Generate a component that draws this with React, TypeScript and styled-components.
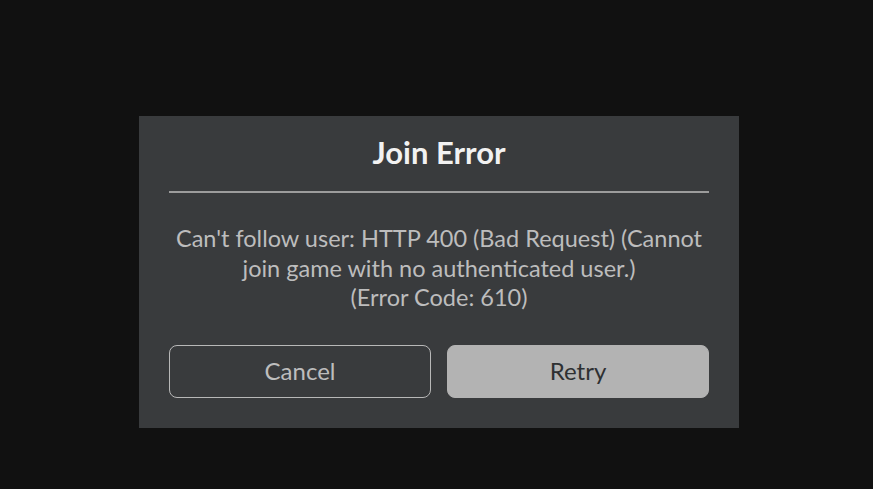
import React from 'react';
import styled, { createGlobalStyle } from 'styled-components';

const GlobalStyle = createGlobalStyle`
  html, body {
    margin: 0;
    padding: 0;
    background: #111111;
  }
  body {
    font-family: "Lato", "Open Sans", sans-serif;
  }
`;

const Screen = styled.div`
  display: flex;
  justify-content: center;
  align-items: flex-start;
  width: 100vw;
  height: 100vh;
  box-sizing: border-box;
  padding: 116px 0 0 5px;
  background: #111111;
`;

const Modal = styled.div`
  width: 600px;
  box-sizing: border-box;
  padding: 0 30px 30px;
  background: #393b3d;
  display: flex;
  flex-direction: column;
`;

const Header = styled.div`
  height: 75px;
  display: flex;
  align-items: center;
  justify-content: center;
  border-bottom: 2px solid #9c9c9c;
`;

const Title = styled.h1`
  margin: 0;
  padding-bottom: 3px;
  font-size: 31px;
  font-weight: 700;
  color: #f2f2f2;
`;

const Message = styled.p`
  margin: 31px 0 0;
  text-align: center;
  font-size: 23.5px;
  line-height: 29.5px;
  color: #bdbdbd;
`;

const Actions = styled.div`
  display: grid;
  grid-template-columns: 1fr 1fr;
  gap: 16px;
  margin-top: 32px;
`;

const Button = styled.button<{ $primary?: boolean }>`
  height: 53px;
  padding: 0 0 2px;
  border-radius: 8px;
  font-family: inherit;
  font-size: 24px;
  cursor: pointer;
  box-sizing: border-box;
  border: 1px solid ${({ $primary }) => ($primary ? '#b3b3b3' : '#b8b8b8')};
  background: ${({ $primary }) => ($primary ? '#b3b3b3' : 'transparent')};
  color: ${({ $primary }) => ($primary ? '#2e3032' : '#bdbdbd')};
`;

export default function App() {
  return (
    <>
      <GlobalStyle />
      <Screen>
        <Modal>
          <Header>
            <Title>Join Error</Title>
          </Header>
          <Message>
            Can't follow user: HTTP 400 (Bad Request) (Cannot
            <br />
            join game with no authenticated user.)
            <br />
            (Error Code: 610)
          </Message>
          <Actions>
            <Button>Cancel</Button>
            <Button $primary>Retry</Button>
          </Actions>
        </Modal>
      </Screen>
    </>
  );
}
